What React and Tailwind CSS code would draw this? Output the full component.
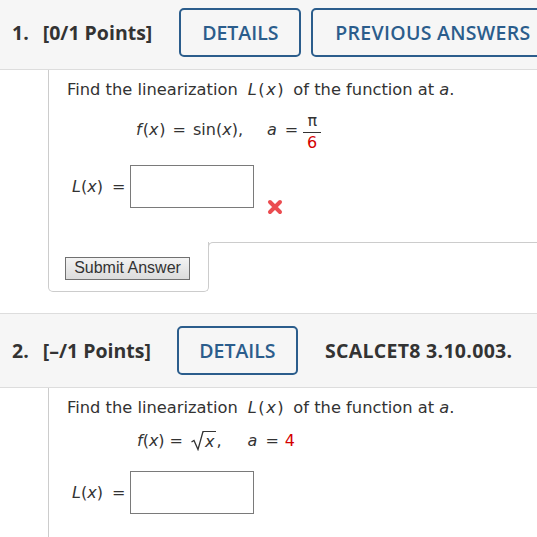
import React from 'react';

const headFont = { fontFamily: '"Open Sans", "Noto Sans", sans-serif' };

const HeaderButton = ({ children, className = '' }) => (
  <div
    className={`flex h-[49px] shrink-0 items-center rounded-[5px] border-2 border-[#2b5d8c] text-[19.5px] font-semibold text-[#2b5d8c] ${className}`}
  >
    {children}
  </div>
);

const QuestionHeader = ({ num, points, children, className = '' }) => (
  <div
    className={`flex h-[75px] items-center whitespace-nowrap border-y border-[#dddddd] bg-[#f6f6f6] pl-[12px] ${className}`}
    style={headFont}
  >
    <span className="text-[19.5px] font-bold text-[#333333]">{num}.</span>
    <span className="ml-[14px] text-[19.5px] font-bold text-[#333333]">[{points} Points]</span>
    {children}
  </div>
);

const V = ({ children, className = '' }) => <span className={`italic ${className}`}>{children}</span>;

const Lx = () => (
  <span>
    <V>L</V>(<V>x</V>)
  </span>
);

const RedX = () => (
  <svg width="16" height="16" viewBox="0 0 16 16" className="shrink-0">
    <path d="M3 3 L13 13 M13 3 L3 13" stroke="#eb4c50" strokeWidth="4" strokeLinecap="round" />
  </svg>
);

const Sentence = () => (
  <p className="h-[20px] leading-[20px] whitespace-nowrap">
    Find the linearization
    <span className="ml-[10px] mr-[3px] tracking-[1.5px]">
      <Lx />
    </span>
    {' '}of the function at <V>a</V>.
  </p>
);

const AnswerRow = ({ wrong }) => (
  <div className="flex h-[43px] items-start">
    <div className="flex h-[43px] w-[63px] shrink-0 items-center pl-[5px] text-[16px]">
      <Lx />
      <span className="ml-[9px]">=</span>
    </div>
    <div className="h-[43px] w-[124px] shrink-0 border border-[#7a7a7a] bg-white" />
    {wrong && (
      <div className="ml-[13px] mt-[34px] shrink-0">
        <RedX />
      </div>
    )}
  </div>
);

export default function App() {
  return (
    <div
      className="h-[537px] w-[537px] overflow-hidden bg-white text-[16.3px] text-[#333333]"
      style={{ fontFamily: '"DejaVu Sans", Verdana, sans-serif' }}
    >
      {/* question 1 */}
      <QuestionHeader num="1" points="0/1" className="-mt-[5px]">
        <HeaderButton className="ml-[27px] w-[122px] justify-center">DETAILS</HeaderButton>
        <HeaderButton className="ml-[10px] w-[246px] pl-[22px] tracking-[0.3px]">PREVIOUS ANSWERS</HeaderButton>
      </QuestionHeader>

      <div className="ml-[48px]">
        <div className="border-l border-[#cccccc] pb-[34px] pl-[18px] pt-[10px]">
          <Sentence />
          <div className="mt-[9px] flex h-[42px] items-center whitespace-nowrap pl-[69px] text-[16px]">
            <V className="pr-[1px]">f</V>(<V className="pr-[1px]">x</V>)<span className="mx-[7px]">=</span>sin(<V>x</V>),
            <span className="ml-[24px]"><V>a</V></span>
            <span className="ml-[8px] mr-[5px]">=</span>
            <span className="inline-flex flex-col items-center pt-[4px]">
              <span className="leading-[16px]">π</span>
              <span className="mt-[3px] h-px w-[18px] bg-[#333333]" />
              <span className="mt-[2px] leading-[16px] text-[#d40000]">6</span>
            </span>
          </div>
          <div className="mt-[14px]">
            <AnswerRow wrong />
          </div>
        </div>
        <div className="flex">
          <div className="h-[50px] w-[161px] shrink-0 rounded-b-[5px] border-x border-b border-[#cccccc] pl-[16px] pt-[14px]">
            <button
              className="h-[23px] w-[125px] border border-[#707070] bg-gradient-to-b from-[#f3f3f3] to-[#dcdcdc] text-[16px] leading-[20px] text-[#333333]"
              style={{ fontFamily: '"Liberation Sans", Arial, sans-serif' }}
            >
              Submit Answer
            </button>
          </div>
          <div className="-ml-px h-[10px] flex-1 rounded-tl-[5px] border-l border-t border-[#cccccc]" />
        </div>
      </div>

      {/* question 2 */}
      <QuestionHeader num="2" points="–/1" className="mt-[21px]">
        <HeaderButton className="ml-[26px] w-[121px] justify-center">DETAILS</HeaderButton>
        <span className="ml-[27px] text-[19.5px] font-bold tracking-[0.3px] text-[#333333]">SCALCET8 3.10.003.</span>
      </QuestionHeader>

      <div className="ml-[48px] h-[200px] border-l border-[#cccccc] pl-[18px] pt-[10px]">
        <Sentence />
        <div className="mt-[11px] flex h-[24px] items-center whitespace-nowrap pl-[70px] text-[16px]">
          <V>f</V>(<V>x</V>)<span className="ml-[5px] mr-[8px]">=</span>
          <span className="inline-flex items-start">
            <svg width="13" height="20" viewBox="0 0 13 20" className="shrink-0">
              <path d="M0.5 11 L3 9.5 L7 18.5 L12 0.5 L13 0.5" stroke="#333333" strokeWidth="1.3" fill="none" />
            </svg>
            <span className="border-t border-[#333333] pl-[1px] pr-[2px] pt-[1px] leading-[18px]">
              <V>x</V>
            </span>
          </span>
          ,<span className="ml-[26px]"><V>a</V></span>
          <span className="ml-[8px] mr-[6px]">=</span>
          <span className="text-[#d40000]">4</span>
        </div>
        <div className="mt-[18px]">
          <AnswerRow />
        </div>
      </div>
    </div>
  );
}
